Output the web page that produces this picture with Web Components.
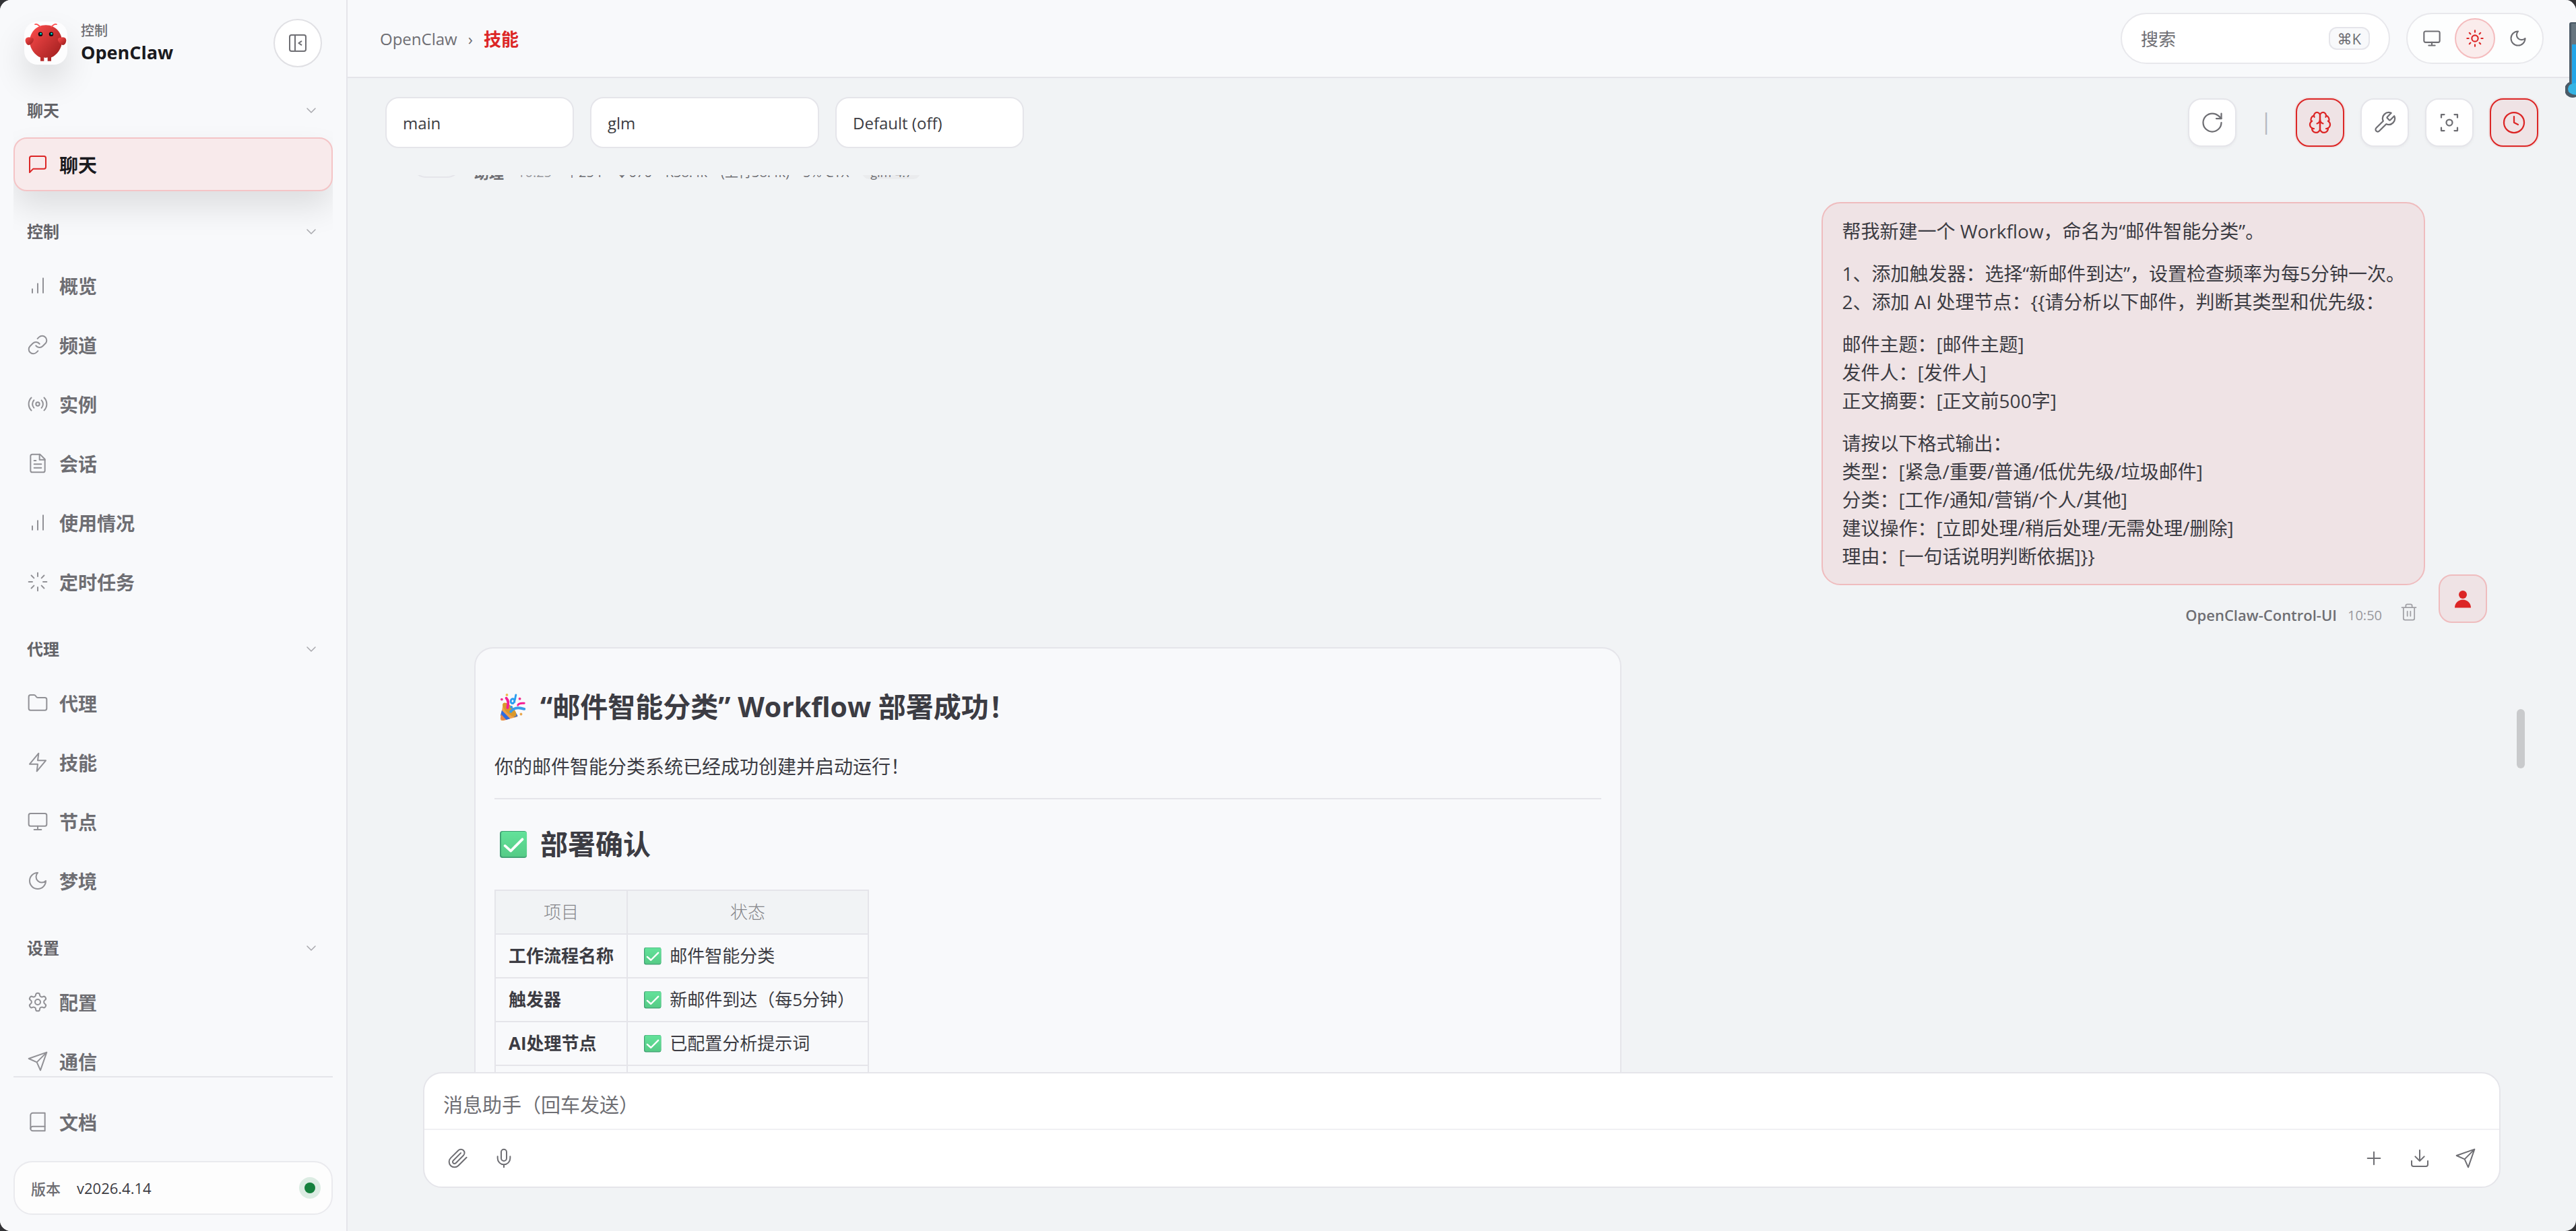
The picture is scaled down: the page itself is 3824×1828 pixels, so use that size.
<!DOCTYPE html>
<html lang="zh-CN">
<head>
<meta charset="utf-8">
<title>OpenClaw Control</title>
<style>
	html {
		background:#333336;
	}
	body {
		margin:0;
		overflow:hidden;
		font-family:"Open Sans","Noto Sans CJK SC",sans-serif;
		font-size:28px;
		color:#3c3c43;
		--bg:#f1f3f5;
		--panel:#f8f9fb;
		--card:#ffffff;
		--line:#e5e5ea;
		--muted:#6e6e73;
		--strong:#1a1a1e;
		--accent:#dc2626;
		--accent-soft:#efe3e5;
		--accent-line:#efbcbe;
	}
</style>
</head>
<body>
<claw-app>
	<claw-sidebar slot="sidebar">
		<claw-nav-group label="聊天">
			<claw-nav-item icon="message" active>聊天</claw-nav-item>
		</claw-nav-group>
		<claw-nav-group label="控制">
			<claw-nav-item icon="bars">概览</claw-nav-item>
			<claw-nav-item icon="link">频道</claw-nav-item>
			<claw-nav-item icon="radio">实例</claw-nav-item>
			<claw-nav-item icon="file">会话</claw-nav-item>
			<claw-nav-item icon="bars">使用情况</claw-nav-item>
			<claw-nav-item icon="loader">定时任务</claw-nav-item>
		</claw-nav-group>
		<claw-nav-group label="代理">
			<claw-nav-item icon="folder">代理</claw-nav-item>
			<claw-nav-item icon="zap">技能</claw-nav-item>
			<claw-nav-item icon="monitor">节点</claw-nav-item>
			<claw-nav-item icon="moon">梦境</claw-nav-item>
		</claw-nav-group>
		<claw-nav-group label="设置">
			<claw-nav-item icon="settings">配置</claw-nav-item>
			<claw-nav-item icon="send">通信</claw-nav-item>
		</claw-nav-group>
		<claw-nav-item slot="footer" icon="book">文档</claw-nav-item>
	</claw-sidebar>
	<claw-topbar></claw-topbar>
	<claw-toolbar></claw-toolbar>
	<claw-thread>
		<claw-previous></claw-previous>
		<claw-message role="user">
			<p>帮我新建一个 Workflow，命名为“邮件智能分类”。</p>
			<p>1、添加触发器：选择“新邮件到达”，设置检查频率为每5分钟一次。<br>2、添加 AI 处理节点：{{请分析以下邮件，判断其类型和优先级：</p>
			<p>邮件主题：[邮件主题]<br>发件人：[发件人]<br>正文摘要：[正文前500字]</p>
			<p>请按以下格式输出：<br>类型：[紧急/重要/普通/低优先级/垃圾邮件]<br>分类：[工作/通知/营销/个人/其他]<br>建议操作：[立即处理/稍后处理/无需处理/删除]<br>理由：[一句话说明判断依据]}}</p>
		</claw-message>
		<claw-message role="assistant">
			<h2><claw-emoji name="party"></claw-emoji> “邮件智能分类” Workflow 部署成功！</h2>
			<p>你的邮件智能分类系统已经成功创建并启动运行！</p>
			<hr>
			<h2><claw-emoji name="check"></claw-emoji> 部署确认</h2>
			<claw-status-table></claw-status-table>
		</claw-message>
	</claw-thread>
	<claw-composer></claw-composer>
</claw-app>

<script>
const icons = {
	message: '<path d="M21 15a2 2 0 0 1-2 2H7l-4 4V5a2 2 0 0 1 2-2h14a2 2 0 0 1 2 2z"/>',
	bars: '<path d="M12 20V10M18 20V4M6 20v-4"/>',
	link: '<path d="M10 13a5 5 0 0 0 7.54.54l3-3a5 5 0 0 0-7.07-7.07l-1.72 1.71"/><path d="M14 11a5 5 0 0 0-7.54-.54l-3 3a5 5 0 0 0 7.07 7.07l1.71-1.71"/>',
	radio: '<path d="M4.9 19.1C1 15.2 1 8.8 4.9 4.9M7.8 16.2c-2.3-2.3-2.3-6.1 0-8.5M16.2 7.8c2.3 2.3 2.3 6.1 0 8.5M19.1 4.9C23 8.8 23 15.1 19.1 19"/><circle cx="12" cy="12" r="2"/>',
	file: '<path d="M14.5 2H6a2 2 0 0 0-2 2v16a2 2 0 0 0 2 2h12a2 2 0 0 0 2-2V7.5z"/><path d="M14 2v6h6M16 13H8M16 17H8M10 9H8"/>',
	loader: '<path d="M12 2v4M12 18v4M4.93 4.93l2.83 2.83M16.24 16.24l2.83 2.83M2 12h4M18 12h4M4.93 19.07l2.83-2.83M16.24 7.76l2.83-2.83"/>',
	folder: '<path d="M4 20h16a2 2 0 0 0 2-2V8a2 2 0 0 0-2-2h-7.93a2 2 0 0 1-1.66-.9l-.82-1.2A2 2 0 0 0 7.93 3H4a2 2 0 0 0-2 2v13a2 2 0 0 0 2 2z"/>',
	zap: '<path d="M13 2 3 14h9l-1 8 10-12h-9l1-8z"/>',
	monitor: '<rect x="2" y="3" width="20" height="14" rx="2"/><path d="M8 21h8M12 17v4"/>',
	moon: '<path d="M12 3a6 6 0 0 0 9 9 9 9 0 1 1-9-9z"/>',
	settings: '<path d="M12.22 2h-.44a2 2 0 0 0-2 2v.18a2 2 0 0 1-1 1.73l-.43.25a2 2 0 0 1-2 0l-.15-.08a2 2 0 0 0-2.73.73l-.22.38a2 2 0 0 0 .73 2.73l.15.1a2 2 0 0 1 1 1.72v.51a2 2 0 0 1-1 1.74l-.15.09a2 2 0 0 0-.73 2.73l.22.38a2 2 0 0 0 2.73.73l.15-.08a2 2 0 0 1 2 0l.43.25a2 2 0 0 1 1 1.73V20a2 2 0 0 0 2 2h.44a2 2 0 0 0 2-2v-.18a2 2 0 0 1 1-1.73l.43-.25a2 2 0 0 1 2 0l.15.08a2 2 0 0 0 2.73-.73l.22-.39a2 2 0 0 0-.73-2.73l-.15-.08a2 2 0 0 1-1-1.74v-.5a2 2 0 0 1 1-1.74l.15-.09a2 2 0 0 0 .73-2.73l-.22-.38a2 2 0 0 0-2.73-.73l-.15.08a2 2 0 0 1-2 0l-.43-.25a2 2 0 0 1-1-1.73V4a2 2 0 0 0-2-2z"/><circle cx="12" cy="12" r="3"/>',
	send: '<path d="m22 2-7 20-4-9-9-4zM22 2 11 13"/>',
	book: '<path d="M4 19.5A2.5 2.5 0 0 1 6.5 17H20"/><path d="M6.5 2H20v20H6.5A2.5 2.5 0 0 1 4 19.5v-15A2.5 2.5 0 0 1 6.5 2z"/>',
	chevron: '<path d="m6 9 6 6 6-6"/>',
	collapse: '<rect x="3" y="3" width="18" height="18" rx="2"/><path d="M9 3v18M16 10l-3 2 3 2"/>',
	sun: '<circle cx="12" cy="12" r="4"/><path d="M12 2v2M12 20v2M4.93 4.93l1.41 1.41M17.66 17.66l1.41 1.41M2 12h2M20 12h2M6.34 17.66l-1.41 1.41M19.07 4.93l-1.41 1.41"/>',
	refresh: '<path d="M21 12a9 9 0 1 1-9-9c2.52 0 4.93 1 6.74 2.74L21 8"/><path d="M21 3v5h-5"/>',
	brain: '<path d="M12 5a3 3 0 1 0-5.997.125 4 4 0 0 0-2.526 5.77 4 4 0 0 0 .556 6.588A4 4 0 1 0 12 18Z"/><path d="M12 5a3 3 0 1 1 5.997.125 4 4 0 0 1 2.526 5.77 4 4 0 0 1-.556 6.588A4 4 0 1 1 12 18Z"/><path d="M15 13a4.5 4.5 0 0 1-3-4 4.5 4.5 0 0 1-3 4M17.599 6.5a3 3 0 0 0 .399-1.375M6.003 5.125A3 3 0 0 0 6.401 6.5M3.477 10.896a4 4 0 0 1 .585-.396M19.938 10.5a4 4 0 0 1 .585.396M6 18a4 4 0 0 1-1.967-.516M19.967 17.484A4 4 0 0 1 18 18"/>',
	wrench: '<path d="M14.7 6.3a1 1 0 0 0 0 1.4l1.6 1.6a1 1 0 0 0 1.4 0l3.77-3.77a6 6 0 0 1-7.94 7.94l-6.91 6.91a2.12 2.12 0 0 1-3-3l6.91-6.91a6 6 0 0 1 7.94-7.94l-3.76 3.76z"/>',
	focus: '<path d="M4 7V4h3M17 4h3v3M20 17v3h-3M7 20H4v-3"/><circle cx="12" cy="12" r="3"/>',
	clock: '<circle cx="12" cy="12" r="10"/><path d="M12 6v6l4 2"/>',
	trash: '<path d="M3 6h18M19 6v14a2 2 0 0 1-2 2H7a2 2 0 0 1-2-2V6M8 6V4a2 2 0 0 1 2-2h4a2 2 0 0 1 2 2v2M10 11v6M14 11v6"/>',
	user: '<g fill="currentColor" stroke="none"><circle cx="12" cy="8" r="4"/><path d="M20 21a8 8 0 1 0-16 0z"/></g>',
	clip: '<path d="m21.44 11.05-9.19 9.19a6 6 0 0 1-8.49-8.49l8.57-8.57A4 4 0 1 1 18 8.84l-8.59 8.57a2 2 0 0 1-2.83-2.83l8.49-8.48"/>',
	mic: '<path d="M12 2a3 3 0 0 0-3 3v7a3 3 0 0 0 6 0V5a3 3 0 0 0-3-3z"/><path d="M19 10v2a7 7 0 0 1-14 0v-2M12 19v3"/>',
	plus: '<path d="M5 12h14M12 5v14"/>',
	download: '<path d="M21 15v4a2 2 0 0 1-2 2H5a2 2 0 0 1-2-2v-4M7 10l5 5 5-5M12 15V3"/>'
};

const emoji = {
	check: `
		<defs><linearGradient id="g" x1="0" y1="0" x2="0" y2="1"><stop offset="0" stop-color="#63e29a"/><stop offset="1" stop-color="#55cb86"/></linearGradient></defs>
		<rect x="0" y="0" width="42" height="42" rx="4" fill="#3f9f72"/>
		<rect x="2" y="1" width="40" height="39" rx="3" fill="url(#g)"/>
		<path d="M8 23l9 8 18-18" fill="none" stroke="#fff" stroke-width="4" stroke-linecap="round" stroke-linejoin="round"/>`,
	party: `
		<path d="M5 16 28 36 4 42c-2 0-3-1-3-3z" fill="#f0a04b"/>
		<path d="M3 26 16 39l-6 2L1 34zM5 16l18 21 5-2-4-7z" fill="#2f6be0"/>
		<path d="M2 32l8 9-5 1-4-3z" fill="#e8894c"/>
		<ellipse cx="15" cy="25" rx="6" ry="14" transform="rotate(-44 15 25)" fill="#d9982c"/>
		<path d="M10 7c4 4 3 9 2 15" fill="none" stroke="#f51e93" stroke-width="4" stroke-linecap="round"/>
		<path d="M17 28c5-7 12-7 21-4" fill="none" stroke="#3a9be8" stroke-width="4" stroke-linecap="round"/>
		<path d="M25 2c-2 8-1 10-4 13-4 1-5-3-3-6 3-2 5 0 5 4" fill="none" stroke="#2a9df0" stroke-width="3" stroke-linecap="round"/>
		<path d="M28 18c2-4 6-3 10-3" fill="none" stroke="#f51e93" stroke-width="3" stroke-linecap="round"/>
		<circle cx="3" cy="9" r="2" fill="#f0308f"/><circle cx="31" cy="8" r="2" fill="#f0308f"/>
		<circle cx="11" cy="2" r="2" fill="#f0bb50"/><circle cx="33" cy="32" r="2" fill="#e8a850"/><circle cx="18" cy="21" r="2" fill="#2a9df0"/>`
};

class ClawElement extends HTMLElement {
	constructor() {
		super();
		this.attachShadow({mode: 'open'});
	}

	connectedCallback() {
		const template = document.createElement('template');
		template.innerHTML = this.markup;
		this.shadowRoot.replaceChildren(template.content.cloneNode(true));
	}
}

class ClawIcon extends ClawElement {
	get markup() {
		return `
		<style>
		:host {
			display:block;
			flex:none;
			width:var(--icon-size, 32px);
			height:var(--icon-size, 32px);
		}
		svg {
			display:block;
			width:100%;
			height:100%;
			fill:none;
			stroke:currentColor;
			stroke-width:var(--icon-stroke, 1.5);
			stroke-linecap:round;
			stroke-linejoin:round;
		}
		</style>
		<svg viewBox="0 0 24 24" aria-hidden="true">${icons[this.getAttribute('name')]}</svg>`;
	}
}

class ClawEmoji extends ClawElement {
	get markup() {
		return `
		<style>
		:host {
			display:inline-block;
			width:1em;
			height:1em;
			margin:0 .2em;
			vertical-align:-.14em;
		}
		svg {
			display:block;
			width:100%;
			height:100%;
		}
		</style>
		<svg viewBox="0 0 43 43" aria-hidden="true">${emoji[this.getAttribute('name')]}</svg>`;
	}
}

class ClawLogo extends ClawElement {
	get markup() {
		return `
		<style>
		:host {
			display:block;
			width:64px;
			height:64px;
			border-radius:20px;
			background:#fdfdfe;
			box-shadow:0 24px 48px rgba(0,0,0,.12);
		}
		</style>
		<svg width="64" height="64" viewBox="0 0 120 120" aria-hidden="true">
			<defs><linearGradient id="shell" x1="0" y1="0" x2="1" y2="1"><stop offset="0" stop-color="#ff4d4d"/><stop offset="1" stop-color="#991b1b"/></linearGradient></defs>
			<g fill="url(#shell)">
				<path d="M60 10C30 10 15 35 15 55s15 40 30 45v10h10v-10s5 2 10 0v10h10v-10c15-5 30-25 30-45S90 10 60 10z"/>
				<path d="M20 45C5 40 0 50 5 60s15 5 20-5c3-7 0-10-5-10z"/>
				<path d="M100 45c15-5 20 5 15 15s-15 5-20-5c-3-7 0-10 5-10z"/>
			</g>
			<path d="M45 15Q35 5 30 8M75 15Q85 5 90 8" fill="none" stroke="#ff4d4d" stroke-width="3" stroke-linecap="round"/>
			<g fill="#050810"><circle cx="45" cy="35" r="6"/><circle cx="75" cy="35" r="6"/></g>
			<g fill="#00e5cc"><circle cx="46" cy="34" r="2.5"/><circle cx="76" cy="34" r="2.5"/></g>
		</svg>`;
	}
}

class ClawNavItem extends ClawElement {
	get markup() {
		return `
		<style>
		:host {
			display:block;
		}
		a {
			box-sizing:border-box;
			display:flex;
			align-items:center;
			gap:16px;
			height:80px;
			padding:0 18px;
			border:2px solid transparent;
			border-radius:20px;
			color:var(--muted);
			font-weight:600;
			text-decoration:none;
		}
		claw-icon {
			color:#919196;
		}
		:host([active]) a {
			background:#f8eaeb;
			border-color:#f4c4c6;
			color:var(--strong);
			box-shadow:0 24px 48px rgba(0,0,0,.11);
		}
		:host([active]) claw-icon {
			color:var(--accent);
		}
		</style>
		<a href="#"><claw-icon name="${this.getAttribute('icon')}"></claw-icon><slot></slot></a>`;
	}
}

class ClawNavGroup extends ClawElement {
	get markup() {
		return `
		<style>
		:host {
			display:flex;
			flex-direction:column;
			gap:16px;
		}
		button {
			display:flex;
			align-items:center;
			justify-content:space-between;
			height:48px;
			padding:0 20px;
			border:0;
			background:none;
			color:#636368;
			font:600 24px/1 "Open Sans","Noto Sans CJK SC",sans-serif;
		}
		claw-icon {
			--icon-size:24px;
			color:#a8a8ad;
		}
		.items {
			display:flex;
			flex-direction:column;
			gap:8px;
		}
		</style>
		<button type="button">${this.getAttribute('label')}<claw-icon name="chevron"></claw-icon></button>
		<div class="items"><slot></slot></div>`;
	}
}

class ClawSidebar extends ClawElement {
	get markup() {
		return `
		<style>
		:host {
			box-sizing:border-box;
			display:flex;
			flex-direction:column;
			width:516px;
			height:100%;
			padding:28px 20px 24px;
			border-right:2px solid var(--line);
			background:var(--panel);
		}
		header {
			display:flex;
			align-items:center;
			gap:20px;
			height:72px;
			padding:0 16px;
			margin-bottom:40px;
		}
		.title {
			flex:1;
			display:flex;
			flex-direction:column;
		}
		.title small {
			font-size:20px;
			line-height:28px;
			font-weight:500;
			color:var(--muted);
		}
		.title strong {
			font-size:27px;
			line-height:36px;
			color:var(--strong);
		}
		header button {
			display:grid;
			place-items:center;
			width:72px;
			height:72px;
			padding:0;
			border:2px solid #e0e0e4;
			border-radius:50%;
			background:#fff;
			color:var(--muted);
		}
		nav {
			flex:1;
			min-height:0;
			overflow:hidden;
			display:flex;
			flex-direction:column;
			gap:36px;
		}
		footer {
			display:flex;
			flex-direction:column;
			gap:18px;
			padding-top:26px;
			border-top:2px solid var(--line);
		}
		.version {
			box-sizing:border-box;
			display:flex;
			align-items:center;
			gap:24px;
			height:80px;
			padding:0 24px;
			border:2px solid #eaeaee;
			border-radius:28px;
			background:#fdfdfd;
			font-size:22px;
			font-weight:500;
		}
		.version span {
			color:var(--muted);
		}
		.version b {
			flex:1;
			font-weight:500;
		}
		.version i {
			width:16px;
			height:16px;
			border-radius:50%;
			background:#15803d;
			box-shadow:0 0 0 8px #dcece3;
		}
		</style>
		<header>
			<claw-logo></claw-logo>
			<div class="title"><small>控制</small><strong>OpenClaw</strong></div>
			<button type="button" aria-label="收起侧栏"><claw-icon name="collapse"></claw-icon></button>
		</header>
		<nav><slot></slot></nav>
		<footer>
			<slot name="footer"></slot>
			<div class="version"><span>版本</span><b>v2026.4.14</b><i></i></div>
		</footer>`;
	}
}

class ClawTopbar extends ClawElement {
	get markup() {
		return `
		<style>
		:host {
			box-sizing:border-box;
			display:flex;
			align-items:center;
			gap:24px;
			height:116px;
			padding:0 48px;
			border-bottom:2px solid var(--line);
			background:var(--panel);
		}
		.crumbs {
			flex:1;
			display:flex;
			align-items:center;
			gap:16px;
			font-size:24px;
		}
		.crumbs a {
			color:var(--muted);
			text-decoration:none;
		}
		.crumbs span {
			color:var(--muted);
		}
		.crumbs strong {
			font-size:26px;
			color:var(--accent);
		}
		.search {
			display:flex;
			align-items:center;
			justify-content:space-between;
			box-sizing:border-box;
			width:400px;
			height:76px;
			padding:0 28px;
			border:2px solid #e8e8ec;
			border-radius:38px;
			background:#fff;
			color:var(--muted);
			font:26px "Open Sans","Noto Sans CJK SC",sans-serif;
		}
		kbd {
			box-sizing:border-box;
			height:34px;
			padding:0 11px;
			border:2px solid var(--line);
			border-radius:12px;
			background:var(--panel);
			font:22px/30px "Open Sans","DejaVu Sans",sans-serif;
		}
		.theme {
			display:flex;
			gap:4px;
			padding:6px;
			border:2px solid #e8e8ec;
			border-radius:38px;
			background:#fdfefe;
		}
		.theme button {
			display:grid;
			place-items:center;
			width:60px;
			height:60px;
			padding:0;
			border:2px solid transparent;
			border-radius:50%;
			background:none;
			color:var(--muted);
			--icon-size:28px;
			--icon-stroke:1.8;
		}
		.theme .on {
			border-color:#f4bcbe;
			background:#faecec;
			color:var(--accent);
		}
		</style>
		<div class="crumbs"><a href="#">OpenClaw</a><span>›</span><strong>技能</strong></div>
		<button class="search" type="button">搜索<kbd>⌘K</kbd></button>
		<div class="theme">
			<button type="button" aria-label="系统"><claw-icon name="monitor"></claw-icon></button>
			<button type="button" aria-label="浅色" class="on"><claw-icon name="sun"></claw-icon></button>
			<button type="button" aria-label="深色"><claw-icon name="moon"></claw-icon></button>
		</div>`;
	}
}

class ClawToolbar extends ClawElement {
	get markup() {
		return `
		<style>
		:host {
			display:flex;
			align-items:center;
			gap:24px;
			padding:28px 56px 40px;
		}
		select {
			appearance:none;
			box-sizing:border-box;
			width:280px;
			height:76px;
			padding:0 24px;
			border:2px solid var(--line);
			border-radius:20px;
			background:#fff;
			color:#3c3c43;
			font:24px "Open Sans","Noto Sans CJK SC",sans-serif;
		}
		.model {
			width:340px;
		}
		.space {
			flex:1;
		}
		button {
			display:grid;
			place-items:center;
			width:72px;
			height:72px;
			padding:0;
			border:2px solid var(--line);
			border-radius:20px;
			background:#fff;
			color:var(--muted);
			box-shadow:0 2px 4px rgba(0,0,0,.04);
			--icon-size:36px;
		}
		.on {
			border-color:var(--accent);
			background:var(--accent-soft);
			color:var(--accent);
			box-shadow:0 0 0 2px rgba(220,38,38,.08);
		}
		.bar {
			width:40px;
			padding-bottom:4px;
			font-size:32px;
			line-height:40px;
			text-align:center;
			color:#b4b8be;
		}
		</style>
		<select aria-label="会话"><option>main</option></select>
		<select aria-label="模型" class="model"><option>glm</option></select>
		<select aria-label="思考"><option>Default (off)</option></select>
		<div class="space"></div>
		<button type="button" aria-label="刷新"><claw-icon name="refresh"></claw-icon></button>
		<span class="bar">|</span>
		<button type="button" aria-label="思考过程" class="on"><claw-icon name="brain"></claw-icon></button>
		<button type="button" aria-label="工具"><claw-icon name="wrench"></claw-icon></button>
		<button type="button" aria-label="专注"><claw-icon name="focus"></claw-icon></button>
		<button type="button" aria-label="定时" class="on"><claw-icon name="clock"></claw-icon></button>`;
	}
}

class ClawThread extends ClawElement {
	get markup() {
		return `
		<style>
		:host {
			display:flex;
			flex:1;
			min-height:0;
			overflow:hidden;
			padding:0 76px 0 96px;
		}
		.list {
			flex:1;
			min-width:0;
			display:flex;
			flex-direction:column;
			padding-right:44px;
		}
		.rail {
			display:flex;
			flex-direction:column;
			width:12px;
		}
		.rail::before {
			content:"";
			flex:none;
			height:59.5%;
		}
		.rail::after {
			content:"";
			height:88px;
			border-radius:6px;
			background:#c9cacc;
		}
		</style>
		<div class="list"><slot></slot></div>
		<div class="rail"></div>`;
	}
}

/* tail end of the reply that is scrolled off the top of the thread */
class ClawPrevious extends ClawElement {
	get markup() {
		return `
		<style>
		:host {
			flex:none;
			display:flex;
			align-items:flex-end;
			gap:20px;
			height:10px;
			margin-bottom:30px;
			font-size:20px;
			line-height:28px;
			color:var(--muted);
			white-space:nowrap;
		}
		.avatar {
			box-sizing:border-box;
			width:72px;
			height:72px;
			margin-bottom:6px;
			border:2px solid var(--line);
			border-radius:20px;
		}
		time {
			color:#98989d;
		}
		b {
			font-size:22px;
		}
		.tag {
			margin-bottom:4px;
			padding:0 12px;
			border-radius:12px;
			background:#eaebed;
			font-size:18px;
			line-height:20px;
		}
		</style>
		<div class="avatar"></div>
		<b>助理</b><time>10:25</time><span>↑254</span><span>↓676</span><span>R38.4k</span><span>(上行38.4k)</span><span>5% CTX</span><span class="tag">glm-4.7</span>`;
	}
}

class ClawMessage extends ClawElement {
	get markup() {
		const user = this.getAttribute('role') === 'user';
		return `
		<style>
		:host {
			flex:none;
			display:flex;
			align-items:flex-end;
			gap:20px;
			margin-bottom:36px;
		}
		:host([role=user]) {
			justify-content:flex-end;
		}
		:host([role=assistant]) {
			padding-left:92px;
		}
		.bubble {
			box-sizing:border-box;
			padding:20px 28px;
			border:2px solid var(--line);
			border-radius:28px;
			background:var(--panel);
			line-height:42px;
		}
		:host([role=assistant]) .column {
			width:57%;
		}
		:host([role=user]) .bubble {
			border-color:var(--accent-line);
			background:var(--accent-soft);
		}
		::slotted(p) {
			margin:21px 0 0;
		}
		::slotted(p:first-child) {
			margin-top:0;
		}
		::slotted(h2) {
			margin:34px 0 36px;
			font-size:41px;
			line-height:64px;
		}
		:host([role=assistant]) ::slotted(p) {
			margin:0;
		}
		::slotted(hr) {
			margin:26px 0 34px;
			border:0;
			border-top:2px solid var(--line);
		}
		.meta {
			display:flex;
			align-items:center;
			justify-content:flex-end;
			gap:16px;
			height:24px;
			margin-top:32px;
			padding-right:10px;
			color:#98989d;
			font-size:20px;
		}
		.meta b {
			font-size:22px;
			font-weight:600;
			color:var(--muted);
		}
		.meta button {
			padding:0 0 8px 10px;
			border:0;
			background:none;
			color:#a0a0a5;
			--icon-size:28px;
		}
		.avatar {
			box-sizing:border-box;
			display:grid;
			place-items:center;
			width:72px;
			height:72px;
			border:2px solid var(--accent-line);
			border-radius:20px;
			background:var(--accent-soft);
			color:var(--accent);
			--icon-size:36px;
		}
		</style>
		<div class="column">
			<div class="bubble"><slot></slot></div>
			${user ? `<div class="meta"><b>OpenClaw-Control-UI</b><time>10:50</time><button type="button" aria-label="删除"><claw-icon name="trash"></claw-icon></button></div>` : ''}
		</div>
		${user ? '<div class="avatar"><claw-icon name="user"></claw-icon></div>' : ''}`;
	}
}

class ClawStatusTable extends ClawElement {
	get markup() {
		const rows = [
			['工作流程名称', '邮件智能分类'],
			['触发器', '新邮件到达（每5分钟）'],
			['AI处理节点', '已配置分析提示词']
		];
		return `
		<style>
		:host {
			display:block;
			font-size:26px;
			line-height:39px;
		}
		table {
			border-collapse:collapse;
		}
		th, td {
			height:39px;
			padding:12px 19px;
			border:2px solid var(--line);
			text-align:left;
		}
		thead th {
			background:var(--bg);
			color:#85858a;
			font-weight:300;
			text-align:center;
		}
		</style>
		<table>
			<thead><tr><th>项目</th><th>状态</th></tr></thead>
			<tbody>
				${rows.map(([name, state]) => `<tr><th>${name}</th><td><claw-emoji name="check"></claw-emoji> ${state}</td></tr>`).join('')}
				<tr><th></th><td></td></tr>
			</tbody>
		</table>`;
	}
}

class ClawComposer extends ClawElement {
	get markup() {
		return `
		<style>
		:host {
			display:block;
			padding:0 112px 64px;
		}
		form {
			overflow:hidden;
			border:2px solid var(--line);
			border-radius:28px;
			background:var(--card);
		}
		textarea {
			display:block;
			box-sizing:border-box;
			width:100%;
			height:82px;
			padding:26px 28px 14px;
			border:0;
			outline:0;
			resize:none;
			background:none;
			font:29px/42px "Open Sans","Noto Sans CJK SC",sans-serif;
		}
		textarea::placeholder {
			color:var(--muted);
		}
		.actions {
			display:flex;
			align-items:center;
			gap:8px;
			height:84px;
			padding:0 20px;
			border-top:2px solid #f0f0f3;
		}
		.space {
			flex:1;
		}
		button {
			display:grid;
			place-items:center;
			width:60px;
			height:60px;
			padding:0;
			border:0;
			background:none;
			color:var(--muted);
		}
		</style>
		<form>
			<textarea aria-label="消息" placeholder="消息助手（回车发送）"></textarea>
			<div class="actions">
				<button type="button" aria-label="附件"><claw-icon name="clip"></claw-icon></button>
				<button type="button" aria-label="语音"><claw-icon name="mic"></claw-icon></button>
				<div class="space"></div>
				<button type="button" aria-label="新会话"><claw-icon name="plus"></claw-icon></button>
				<button type="button" aria-label="导出"><claw-icon name="download"></claw-icon></button>
				<button type="button" aria-label="发送"><claw-icon name="send"></claw-icon></button>
			</div>
		</form>`;
	}
}

class ClawApp extends ClawElement {
	get markup() {
		return `
		<style>
		:host {
			display:flex;
			position:relative;
			height:100vh;
			overflow:hidden;
			border-radius:16px;
			background:var(--bg);
		}
		aside {
			flex:none;
		}
		main {
			flex:1;
			min-width:0;
			display:flex;
			flex-direction:column;
		}
		.gauge {
			position:absolute;
			top:32px;
			right:0;
		}
		</style>
		<aside><slot name="sidebar"></slot></aside>
		<main><slot></slot></main>
		<svg class="gauge" width="16" height="114" viewBox="0 0 16 114" aria-hidden="true">
			<path d="M16 1H9Q6 1 6 4v86a12 12 0 0 0 10 22z" fill="#4b5a66"/>
			<path d="M16 3H9v89h7z" fill="#66757f"/>
			<path d="M10 34h6v60h-6z" fill="#22a5e8"/>
			<path d="M16 91q-12 1-12 9t12 9z" fill="#35b4e4"/>
		</svg>`;
	}
}

const elements = {
	'claw-icon': ClawIcon,
	'claw-emoji': ClawEmoji,
	'claw-logo': ClawLogo,
	'claw-nav-item': ClawNavItem,
	'claw-nav-group': ClawNavGroup,
	'claw-sidebar': ClawSidebar,
	'claw-topbar': ClawTopbar,
	'claw-toolbar': ClawToolbar,
	'claw-thread': ClawThread,
	'claw-previous': ClawPrevious,
	'claw-message': ClawMessage,
	'claw-status-table': ClawStatusTable,
	'claw-composer': ClawComposer,
	'claw-app': ClawApp
};

for (const [name, element] of Object.entries(elements)) {
	window.customElements.define(name, element);
}
</script>
</body>
</html>
